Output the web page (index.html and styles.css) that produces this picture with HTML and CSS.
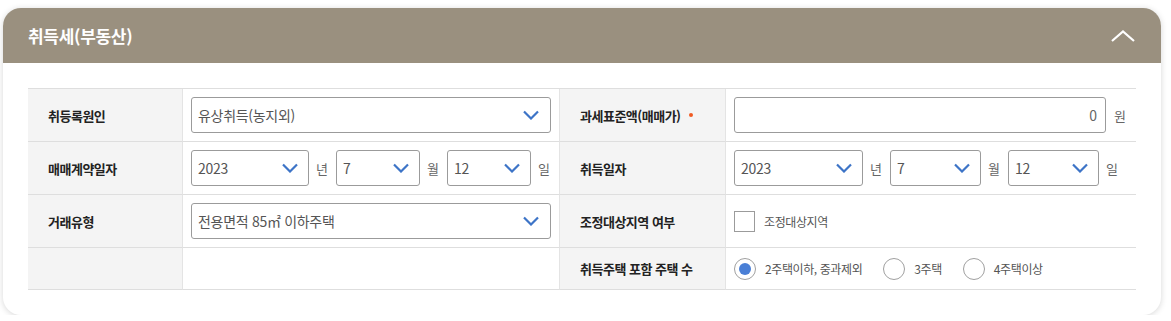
FILE: index.html
```html
<!DOCTYPE html>
<html lang="ko">
<head>
<meta charset="utf-8">
<title>취득세(부동산)</title>
<link rel="stylesheet" href="styles.css">
</head>
<body>
<div class="card">
  <div class="card-head">
    <h2 class="title">취득세(부동산)</h2>
    <svg class="toggle" width="24" height="12" viewBox="0 0 24 12"><path d="M1 11 L12 1.5 L23 11" fill="none" stroke="#fff" stroke-width="2.2"/></svg>
  </div>
  <div class="card-body">
    <div class="form-grid">
      <div class="lbl">취등록원인</div>
      <div class="val">
        <div class="sel w-full">유상취득(농지외)<svg class="chev" width="16" height="10" viewBox="0 0 16 10"><path d="M1 1.5 L8 8.5 L15 1.5" fill="none" stroke="#3d74c7" stroke-width="2.2"/></svg></div>
      </div>
      <div class="lbl lbl-r">과세표준액(매매가)<span class="req"></span></div>
      <div class="val val-r">
        <div class="inp">0</div><span class="unit unit-won">원</span>
      </div>

      <div class="lbl">매매계약일자</div>
      <div class="val">
        <div class="sel w-year">2023<svg class="chev" width="16" height="10" viewBox="0 0 16 10"><path d="M1 1.5 L8 8.5 L15 1.5" fill="none" stroke="#3d74c7" stroke-width="2.2"/></svg></div>
        <span class="unit">년</span>
        <div class="sel w-md">7<svg class="chev" width="16" height="10" viewBox="0 0 16 10"><path d="M1 1.5 L8 8.5 L15 1.5" fill="none" stroke="#3d74c7" stroke-width="2.2"/></svg></div>
        <span class="unit">월</span>
        <div class="sel w-md">12<svg class="chev" width="16" height="10" viewBox="0 0 16 10"><path d="M1 1.5 L8 8.5 L15 1.5" fill="none" stroke="#3d74c7" stroke-width="2.2"/></svg></div>
        <span class="unit">일</span>
      </div>
      <div class="lbl lbl-r">취득일자</div>
      <div class="val val-r">
        <div class="sel w-year-r">2023<svg class="chev" width="16" height="10" viewBox="0 0 16 10"><path d="M1 1.5 L8 8.5 L15 1.5" fill="none" stroke="#3d74c7" stroke-width="2.2"/></svg></div>
        <span class="unit">년</span>
        <div class="sel w-md-r">7<svg class="chev" width="16" height="10" viewBox="0 0 16 10"><path d="M1 1.5 L8 8.5 L15 1.5" fill="none" stroke="#3d74c7" stroke-width="2.2"/></svg></div>
        <span class="unit">월</span>
        <div class="sel w-md-r">12<svg class="chev" width="16" height="10" viewBox="0 0 16 10"><path d="M1 1.5 L8 8.5 L15 1.5" fill="none" stroke="#3d74c7" stroke-width="2.2"/></svg></div>
        <span class="unit">일</span>
      </div>

      <div class="lbl">거래유형</div>
      <div class="val">
        <div class="sel w-full">전용면적 85㎡ 이하주택<svg class="chev" width="16" height="10" viewBox="0 0 16 10"><path d="M1 1.5 L8 8.5 L15 1.5" fill="none" stroke="#3d74c7" stroke-width="2.2"/></svg></div>
      </div>
      <div class="lbl lbl-r">조정대상지역 여부</div>
      <div class="val val-r">
        <span class="check"></span><span class="opt">조정대상지역</span>
      </div>

      <div class="lbl last"></div>
      <div class="val last"></div>
      <div class="lbl lbl-r last">취득주택 포함 주택 수</div>
      <div class="val val-r last">
        <span class="radio on"></span><span class="opt">2주택이하, 중과제외</span>
        <span class="radio"></span><span class="opt">3주택</span>
        <span class="radio"></span><span class="opt">4주택이상</span>
      </div>
    </div>
  </div>
</div>
</body>
</html>
```

FILE: styles.css
```css
html, body {
  margin: 0;
  padding: 0;
  background: #ffffff;
}
body {
  font-family: "Noto Sans CJK KR", "Noto Sans", sans-serif;
  padding: 8px 10px 0 3px;
}
.card {
  background: #fff;
  border-radius: 18px;
  box-shadow: 0 1px 6px rgba(0, 0, 0, 0.16);
  overflow: hidden;
  height: 307px;
  box-sizing: border-box;
}
.card-head {
  background: #9a907f;
  height: 55px;
  display: flex;
  align-items: center;
  justify-content: space-between;
  padding: 0 26px 0 25px;
}
.title {
  margin: 0;
  color: #fff;
  font-size: 17px;
  font-weight: 700;
  letter-spacing: -0.3px;
  line-height: 1;
}
.toggle {
  display: block;
  margin-top: 1px;
}
.card-body {
  padding: 25px 25px 0 25px;
}
.form-grid {
  display: grid;
  grid-template-columns: 154px 377px 166px 1fr;
  grid-template-rows: 53px 53px 53px 42px;
  border-top: 1px solid #dedede;
}
.lbl, .val {
  border-bottom: 1px solid #dedede;
  display: flex;
  align-items: center;
  box-sizing: border-box;
}
.lbl {
  background: #f4f4f4;
  padding-left: 20px;
  font-size: 13px;
  font-weight: 700;
  color: #222;
  letter-spacing: -0.5px;
}
.lbl-r {
  border-left: 1px solid #e4e4e4;
}
.val {
  border-left: 1px solid #e4e4e4;
  padding-left: 8px;
  font-size: 14px;
  color: #555;
}
.sel {
  height: 36px;
  box-sizing: border-box;
  border: 1px solid #9b9b9b;
  border-radius: 3px;
  display: flex;
  align-items: center;
  justify-content: space-between;
  padding: 0 10px 0 6px;
  font-size: 14px;
  color: #555;
  letter-spacing: -0.3px;
  background: #fff;
}
.chev {
  display: block;
  flex: none;
}
.w-full { width: 360px; padding-right: 11px; }
.w-year { width: 118px; }
.w-md { width: 84px; }
.w-year-r { width: 129px; }
.w-md-r { width: 91px; }
.unit {
  font-size: 13px;
  color: #666;
  margin: 0 8px 0 7px;
}
.unit:last-child {
  margin-right: 0;
}
.inp {
  width: 372px;
  height: 36px;
  box-sizing: border-box;
  border: 1px solid #9b9b9b;
  border-radius: 3px;
  display: flex;
  align-items: center;
  justify-content: flex-end;
  padding-right: 8px;
  color: #666;
  font-size: 14px;
}
.unit-won {
  margin-left: 8px;
}
.req {
  display: inline-block;
  width: 4px;
  height: 4px;
  border-radius: 50%;
  background: #f05a22;
  margin-left: 8px;
  margin-bottom: 1px;
}
.check {
  width: 21px;
  height: 21px;
  box-sizing: border-box;
  border: 1px solid #9b9b9b;
  background: #fff;
  flex: none;
}
.opt {
  font-size: 12px;
  color: #555;
  letter-spacing: -0.4px;
  margin-left: 9px;
  margin-right: 21px;
}
.radio {
  width: 22px;
  height: 22px;
  box-sizing: border-box;
  border: 1px solid #a0a0a0;
  border-radius: 50%;
  background: #fff;
  flex: none;
  display: flex;
  align-items: center;
  justify-content: center;
}
.radio.on::after {
  content: "";
  width: 12px;
  height: 12px;
  border-radius: 50%;
  background: #4a7fd6;
}
```
